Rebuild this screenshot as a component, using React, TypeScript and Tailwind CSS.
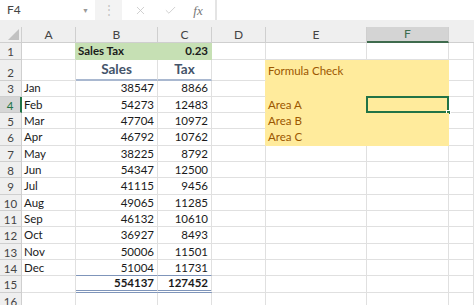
import { X, Check } from "lucide-react";

type Row = { n: number; a?: string; b?: string; c?: string };

const DATA: Row[] = [
  { n: 3, a: "Jan", b: "38547", c: "8866" },
  { n: 4, a: "Feb", b: "54273", c: "12483" },
  { n: 5, a: "Mar", b: "47704", c: "10972" },
  { n: 6, a: "Apr", b: "46792", c: "10762" },
  { n: 7, a: "May", b: "38225", c: "8792" },
  { n: 8, a: "Jun", b: "54347", c: "12500" },
  { n: 9, a: "Jul", b: "41115", c: "9456" },
  { n: 10, a: "Aug", b: "49065", c: "11285" },
  { n: 11, a: "Sep", b: "46132", c: "10610" },
  { n: 12, a: "Oct", b: "36927", c: "8493" },
  { n: 13, a: "Nov", b: "50006", c: "11501" },
  { n: 14, a: "Dec", b: "51004", c: "11731" },
];

const YELLOW_LABELS: Record<number, string> = { 4: "Area A", 5: "Area B", 6: "Area C" };

const grid = "border-r border-b border-[#e0e0e0]";
const yellow = "bg-[#ffeb9c] border-r border-b border-[#ffeb9c] text-[#9c5700]";

function RowHead({ n, selected }: { n: number | string; selected?: boolean }) {
  return (
    <div
      className={`w-[22px] shrink-0 flex items-end justify-center pb-[1px] border-b ${
        selected
          ? "bg-[#d6d6d6] text-[#217346] border-r-2 border-r-[#217346] border-b-[#c8c8c8]"
          : "bg-[#efefef] text-[#444] border-r border-[#cfcfcf]"
      }`}
    >
      {n}
    </div>
  );
}

function SelectedOverlay() {
  return (
    <div className="absolute -top-[1px] -left-[1px] right-[-1px] bottom-[-1px] border-2 border-[#217346]">
      <div className="absolute -bottom-[4px] -right-[4px] w-[5px] h-[5px] bg-[#217346] border border-white" />
    </div>
  );
}

export default function App() {
  return (
    <div className="w-[474px] h-[305px] overflow-hidden bg-white font-['Lato',sans-serif] text-[11.5px] text-[#1a1a1a] leading-none">
      {/* formula bar */}
      <div className="flex h-[20px] bg-[#f3f3f3]">
        <div className="w-[95px] bg-white flex items-center justify-between pl-[7px] pr-[6px] text-[#444] text-[12px]">
          <span>F4</span>
          <span className="text-[7px] text-[#999]">▼</span>
        </div>
        <div className="w-[27px] flex items-center justify-center text-[#c4c4c4] text-[12px]">⋮</div>
        <div className="w-[93px] bg-white flex items-center justify-around px-[4px]">
          <X className="w-[13px] h-[13px] text-[#c6c6c6]" strokeWidth={1.5} />
          <Check className="w-[13px] h-[13px] text-[#c6c6c6]" strokeWidth={1.5} />
          <span className="font-['Liberation_Serif',serif] italic text-[13px] text-[#777]">fx</span>
        </div>
        <div className="w-[2px] bg-[#e4e4e4]" />
        <div className="flex-1 bg-white" />
      </div>
      <div className="h-[7px] bg-[#efefef]" />

      {/* column headers */}
      <div className="flex h-[16px] bg-[#efefef] text-[#444] text-[12px]">
        <div className="w-[22px] shrink-0 relative border-r border-b border-[#cfcfcf]">
          <div className="absolute right-[2px] bottom-[2px] w-0 h-0 border-l-[11px] border-l-transparent border-b-[11px] border-b-[#c2c2c2]" />
        </div>
        <div className="w-[54px] shrink-0 flex items-center justify-center border-r border-b border-[#cfcfcf]">A</div>
        <div className="w-[82px] shrink-0 flex items-center justify-center border-r border-b border-[#cfcfcf]">B</div>
        <div className="w-[54px] shrink-0 flex items-center justify-center border-r border-b border-[#cfcfcf]">C</div>
        <div className="w-[54px] shrink-0 flex items-center justify-center border-r border-b border-[#cfcfcf]">D</div>
        <div className="w-[101px] shrink-0 flex items-center justify-center border-r border-b border-[#cfcfcf]">E</div>
        <div className="w-[82px] shrink-0 flex items-center justify-center bg-[#d4d4d4] text-[#3d6e4f] border-r border-[#cfcfcf] border-b-2 border-b-[#3f6b4e]">F</div>
        <div className="flex-1 border-b border-[#cfcfcf]" />
      </div>

      {/* row 1 */}
      <div className="flex h-[16.5px]">
        <RowHead n={1} />
        <div className={`w-[54px] shrink-0 border-r border-b border-[#e0e0e0] border-r-[#c6e0b4]`} />
        <div className="w-[82px] shrink-0 bg-[#c6e0b4] border-r border-b border-[#c6e0b4] flex items-end pb-[2px] pl-[2px] font-bold">Sales Tax</div>
        <div className="w-[54px] shrink-0 bg-[#c6e0b4] border-r border-b border-[#c6e0b4] flex items-end justify-end pb-[2px] pr-[3px] font-bold">0.23</div>
        <div className={`w-[54px] shrink-0 ${grid}`} />
        <div className={`w-[101px] shrink-0 ${grid}`} />
        <div className={`w-[82px] shrink-0 ${grid}`} />
        <div className={`flex-1 ${grid}`} />
      </div>

      {/* row 2 */}
      <div className="flex h-[21px]">
        <RowHead n={2} />
        <div className={`w-[54px] shrink-0 ${grid}`} />
        <div className="w-[82px] shrink-0 border-r border-r-[#e0e0e0] border-b-2 border-b-[#a9b8d0] flex items-end justify-center pb-[2px] font-bold text-[13.5px] text-[#44546a]">Sales</div>
        <div className="w-[54px] shrink-0 border-r border-r-[#e0e0e0] border-b-2 border-b-[#a9b8d0] flex items-end justify-center pb-[2px] font-bold text-[13.5px] text-[#44546a]">Tax</div>
        <div className={`w-[54px] shrink-0 ${grid} border-r-[#ffeb9c]`} />
        <div className={`w-[101px] shrink-0 ${yellow} flex items-end pb-[3px] pl-[2px]`}>Formula Check</div>
        <div className={`w-[82px] shrink-0 ${yellow}`} />
        <div className={`flex-1 ${grid}`} />
      </div>

      {/* rows 3-14 */}
      {DATA.map((r) => {
        const inYellow = r.n <= 6;
        const last = r.n === 14;
        const numBorder = last ? "border-r border-r-[#e0e0e0] border-b border-b-[#7f95ba]" : grid;
        return (
          <div key={r.n} className="flex h-[16.33px]">
            <RowHead n={r.n} selected={r.n === 4} />
            <div className={`w-[54px] shrink-0 ${grid} flex items-end pb-[2px] pl-[2px]`}>{r.a}</div>
            <div className={`w-[82px] shrink-0 ${numBorder} flex items-end justify-end pb-[2px] pr-[3px]`}>{r.b}</div>
            <div className={`w-[54px] shrink-0 ${numBorder} flex items-end justify-end pb-[2px] pr-[3px]`}>{r.c}</div>
            <div className={`w-[54px] shrink-0 ${grid} ${inYellow ? "border-r-[#ffeb9c]" : ""}`} />
            <div className={`w-[101px] shrink-0 ${inYellow ? yellow : grid} flex items-end pb-[2px] pl-[2px]`}>
              {YELLOW_LABELS[r.n]}
            </div>
            <div className={`w-[82px] shrink-0 relative ${inYellow ? yellow : grid}`}>
              {r.n === 4 && <SelectedOverlay />}
            </div>
            <div className={`flex-1 ${grid}`} />
          </div>
        );
      })}

      {/* row 15 totals */}
      <div className="flex h-[16.5px]">
        <RowHead n={15} />
        <div className={`w-[54px] shrink-0 ${grid}`} />
        <div className="w-[82px] shrink-0 border-r border-r-[#e0e0e0] border-b-[3px] border-double border-b-[#7f95ba] flex items-end justify-end pb-[1px] pr-[3px] font-bold">554137</div>
        <div className="w-[54px] shrink-0 border-r border-r-[#e0e0e0] border-b-[3px] border-double border-b-[#7f95ba] flex items-end justify-end pb-[1px] pr-[3px] font-bold">127452</div>
        <div className={`w-[54px] shrink-0 ${grid}`} />
        <div className={`w-[101px] shrink-0 ${grid}`} />
        <div className={`w-[82px] shrink-0 ${grid}`} />
        <div className={`flex-1 ${grid}`} />
      </div>

      {/* row 16 */}
      <div className="flex h-[16.33px]">
        <RowHead n={16} />
        <div className={`w-[54px] shrink-0 ${grid}`} />
        <div className={`w-[82px] shrink-0 ${grid}`} />
        <div className={`w-[54px] shrink-0 ${grid}`} />
        <div className={`w-[54px] shrink-0 ${grid}`} />
        <div className={`w-[101px] shrink-0 ${grid}`} />
        <div className={`w-[82px] shrink-0 ${grid}`} />
        <div className={`flex-1 ${grid}`} />
      </div>
    </div>
  );
}
